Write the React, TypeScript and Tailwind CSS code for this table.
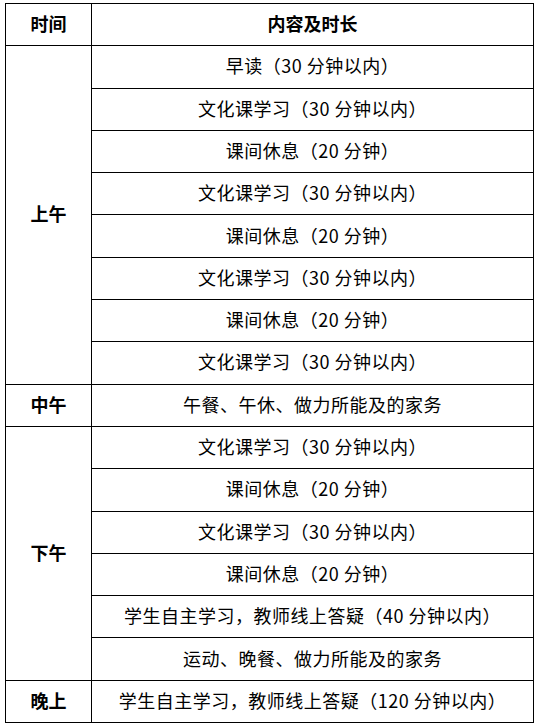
import React from "react";

const rows: { text: string; rowCls: string }[] = [
  { text: "早读（30 分钟以内）", rowCls: "row-start-2" },
  { text: "文化课学习（30 分钟以内）", rowCls: "row-start-3" },
  { text: "课间休息（20 分钟）", rowCls: "row-start-4" },
  { text: "文化课学习（30 分钟以内）", rowCls: "row-start-5" },
  { text: "课间休息（20 分钟）", rowCls: "row-start-6" },
  { text: "文化课学习（30 分钟以内）", rowCls: "row-start-7" },
  { text: "课间休息（20 分钟）", rowCls: "row-start-8" },
  { text: "文化课学习（30 分钟以内）", rowCls: "row-start-9" },
  { text: "午餐、午休、做力所能及的家务", rowCls: "row-start-10" },
  { text: "文化课学习（30 分钟以内）", rowCls: "row-start-11" },
  { text: "课间休息（20 分钟）", rowCls: "row-start-12" },
  { text: "文化课学习（30 分钟以内）", rowCls: "row-start-13" },
  { text: "课间休息（20 分钟）", rowCls: "row-start-14" },
  { text: "学生自主学习，教师线上答疑（40 分钟以内）", rowCls: "row-start-15" },
  { text: "运动、晚餐、做力所能及的家务", rowCls: "row-start-16" },
  { text: "学生自主学习，教师线上答疑（120 分钟以内）", rowCls: "row-start-17" },
];

const left: { text: string; cls: string }[] = [
  { text: "时间", cls: "row-start-1" },
  { text: "上午", cls: "row-start-2 row-span-8" },
  { text: "中午", cls: "row-start-10" },
  { text: "下午", cls: "row-start-11 row-span-6" },
  { text: "晚上", cls: "row-start-17" },
];

export default function App() {
  return (
    <div className="min-h-[727px] w-[538px] bg-white pl-[5px] pt-[3px]">
      <div
        className="grid h-[720px] w-[529px] grid-cols-[85px_441px] grid-rows-[repeat(17,minmax(0,1fr))] gap-px bg-black p-px text-[18px] text-black"
        style={{ fontFamily: '"Noto Sans CJK SC", "Noto Sans", sans-serif' }}
      >
        {left.map((c) => (
          <div
            key={c.text}
            className={`col-start-1 flex items-center justify-center bg-white pb-[2px] font-bold ${c.cls}`}
          >
            {c.text}
          </div>
        ))}
        <div className="col-start-2 row-start-1 flex items-center justify-center bg-white pb-[2px] font-bold">
          内容及时长
        </div>
        {rows.map((r, i) => (
          <div
            key={i}
            className={`col-start-2 flex items-center justify-center bg-white pb-[2px] tracking-[0.5px] ${r.rowCls}`}
          >
            {r.text}
          </div>
        ))}
      </div>
    </div>
  );
}
